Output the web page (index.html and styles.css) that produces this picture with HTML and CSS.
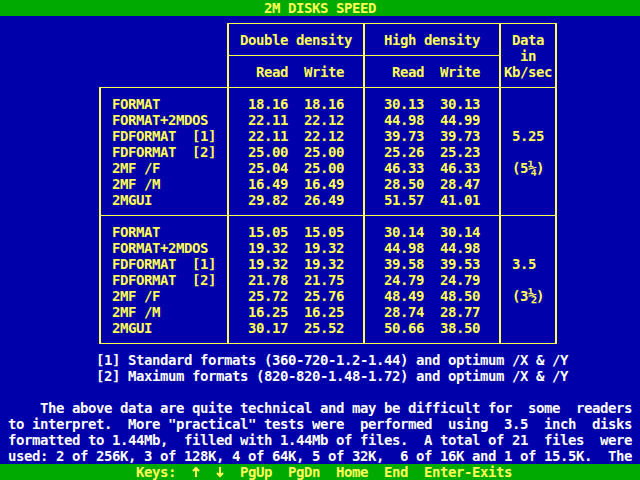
FILE: index.html
```html
<!DOCTYPE html>
<html lang="en">
<head>
<meta charset="utf-8">
<title>2M DISKS SPEED</title>
<link rel="stylesheet" href="styles.css">
</head>
<body>
<div class="screen">
  <header class="bar title">2M DISKS SPEED</header>
  <main class="main">
    <div class="speed">
      <div class="blank"></div>
      <div class="cell"><div class="ln"> Double density</div></div>
      <div class="cell"><div class="ln">  High density</div></div>
      <div class="cell unit"><div class="ln"> Data</div><div class="ln">  in</div><div class="ln">Kb/sec</div></div>
      <div class="cell"><div class="ln">   Read  Write</div></div>
      <div class="cell"><div class="ln">   Read  Write</div></div>

      <div class="cell">
        <div class="ln"> FORMAT</div>
        <div class="ln"> FORMAT+2MDOS</div>
        <div class="ln"> FDFORMAT  [1]</div>
        <div class="ln"> FDFORMAT  [2]</div>
        <div class="ln"> 2MF /F</div>
        <div class="ln"> 2MF /M</div>
        <div class="ln"> 2MGUI</div>
      </div>
      <div class="cell">
        <div class="ln">  18.16  18.16</div>
        <div class="ln">  22.11  22.12</div>
        <div class="ln">  22.11  22.12</div>
        <div class="ln">  25.00  25.00</div>
        <div class="ln">  25.04  25.00</div>
        <div class="ln">  16.49  16.49</div>
        <div class="ln">  29.82  26.49</div>
      </div>
      <div class="cell">
        <div class="ln">  30.13  30.13</div>
        <div class="ln">  44.98  44.99</div>
        <div class="ln">  39.73  39.73</div>
        <div class="ln">  25.26  25.23</div>
        <div class="ln">  46.33  46.33</div>
        <div class="ln">  28.50  28.47</div>
        <div class="ln">  51.57  41.01</div>
      </div>
      <div class="cell unit">
        <div class="ln"></div>
        <div class="ln"></div>
        <div class="ln"> 5.25</div>
        <div class="ln"></div>
        <div class="ln"> (5<span class="frac">¼</span>)</div>
      </div>

      <div class="cell end">
        <div class="ln"> FORMAT</div>
        <div class="ln"> FORMAT+2MDOS</div>
        <div class="ln"> FDFORMAT  [1]</div>
        <div class="ln"> FDFORMAT  [2]</div>
        <div class="ln"> 2MF /F</div>
        <div class="ln"> 2MF /M</div>
        <div class="ln"> 2MGUI</div>
      </div>
      <div class="cell end">
        <div class="ln">  15.05  15.05</div>
        <div class="ln">  19.32  19.32</div>
        <div class="ln">  19.32  19.32</div>
        <div class="ln">  21.78  21.75</div>
        <div class="ln">  25.72  25.76</div>
        <div class="ln">  16.25  16.25</div>
        <div class="ln">  30.17  25.52</div>
      </div>
      <div class="cell end">
        <div class="ln">  30.14  30.14</div>
        <div class="ln">  44.98  44.98</div>
        <div class="ln">  39.58  39.53</div>
        <div class="ln">  24.79  24.79</div>
        <div class="ln">  48.49  48.50</div>
        <div class="ln">  28.74  28.77</div>
        <div class="ln">  50.66  38.50</div>
      </div>
      <div class="cell unit end">
        <div class="ln"></div>
        <div class="ln"></div>
        <div class="ln"> 3.5</div>
        <div class="ln"></div>
        <div class="ln"> (3<span class="frac">½</span>)</div>
      </div>
    </div>

    <div class="notes">
      <div class="ln">[1] Standard formats (360-720-1.2-1.44) and optimum /X &amp; /Y</div>
      <div class="ln">[2] Maximum formats (820-820-1.48-1.72) and optimum /X &amp; /Y</div>
    </div>

    <div class="para">
      <div class="ln">    The above data are quite technical and may be difficult for  some  readers</div>
      <div class="ln">to interpret.  More "practical" tests were  performed  using  3.5  inch  disks</div>
      <div class="ln">formatted to 1.44Mb,  filled with 1.44Mb of files.  A total of 21  files  were</div>
      <div class="ln">used: 2 of 256K, 3 of 128K, 4 of 64K, 5 of 32K,  6 of 16K and 1 of 15.5K.  The</div>
    </div>
  </main>
  <footer class="bar keys"><span class="ln">Keys:  <svg class="arrow" viewBox="0 0 8 16" aria-label="Up"><path d="M4 4v9M1 7l3-3 3 3"/></svg>  <svg class="arrow" viewBox="0 0 8 16" aria-label="Down"><path d="M4 3v9M1 9l3 3 3-3"/></svg>  PgUp  PgDn  Home  End  Enter-Exits</span></footer>
</div>
</body>
</html>
```

FILE: styles.css
```css
html, body {
  margin: 0;
  padding: 0;
  background: #0000aa;
}

.screen {
  width: 640px;
  height: 480px;
  display: flex;
  flex-direction: column;
  background: #0000aa;
  color: #ffff55;
  font-family: "DejaVu Sans Mono", "Liberation Mono", monospace;
  font-weight: bold;
  font-size: 14px;
  letter-spacing: -0.428px;
  line-height: 16px;
  overflow: hidden;
}

.ln {
  height: 16px;
  white-space: pre;
}

.arrow {
  display: inline-block;
  width: 8px;
  height: 16px;
  vertical-align: top;
}

.arrow path {
  fill: none;
  stroke: #ffff55;
  stroke-width: 2;
}

.frac {
  display: inline-block;
  width: 8px;
  height: 16px;
  text-align: center;
  vertical-align: top;
  letter-spacing: 0;
  font-size: 15px;
  line-height: 16px;
}

.bar {
  height: 16px;
  background: #00aa00;
  color: #ffff55;
  white-space: pre;
}

.title {
  text-align: center;
}

.keys {
  padding-left: 136px;
}

.main {
  flex: 1;
  display: flex;
  flex-direction: column;
}

.speed {
  display: grid;
  grid-template-columns: 128px 136px 136px 58px;
  width: max-content;
  margin: 7px 0 0 99px;
}

.blank {
  grid-row: span 2;
}

.cell {
  border-top: 1px solid #ffff55;
  border-left: 2px solid #ffff55;
  padding: 8px 0 7px 3px;
}

.unit {
  border-right: 2px solid #ffff55;
}

.speed > .unit:nth-child(4) {
  grid-row: span 2;
}

.end {
  border-bottom: 1px solid #ffff55;
}

.notes {
  margin: 8px 0 0 96px;
  color: #ffffff;
}

.para {
  margin: 16px 0 0 8px;
  color: #ffffff;
}
```
